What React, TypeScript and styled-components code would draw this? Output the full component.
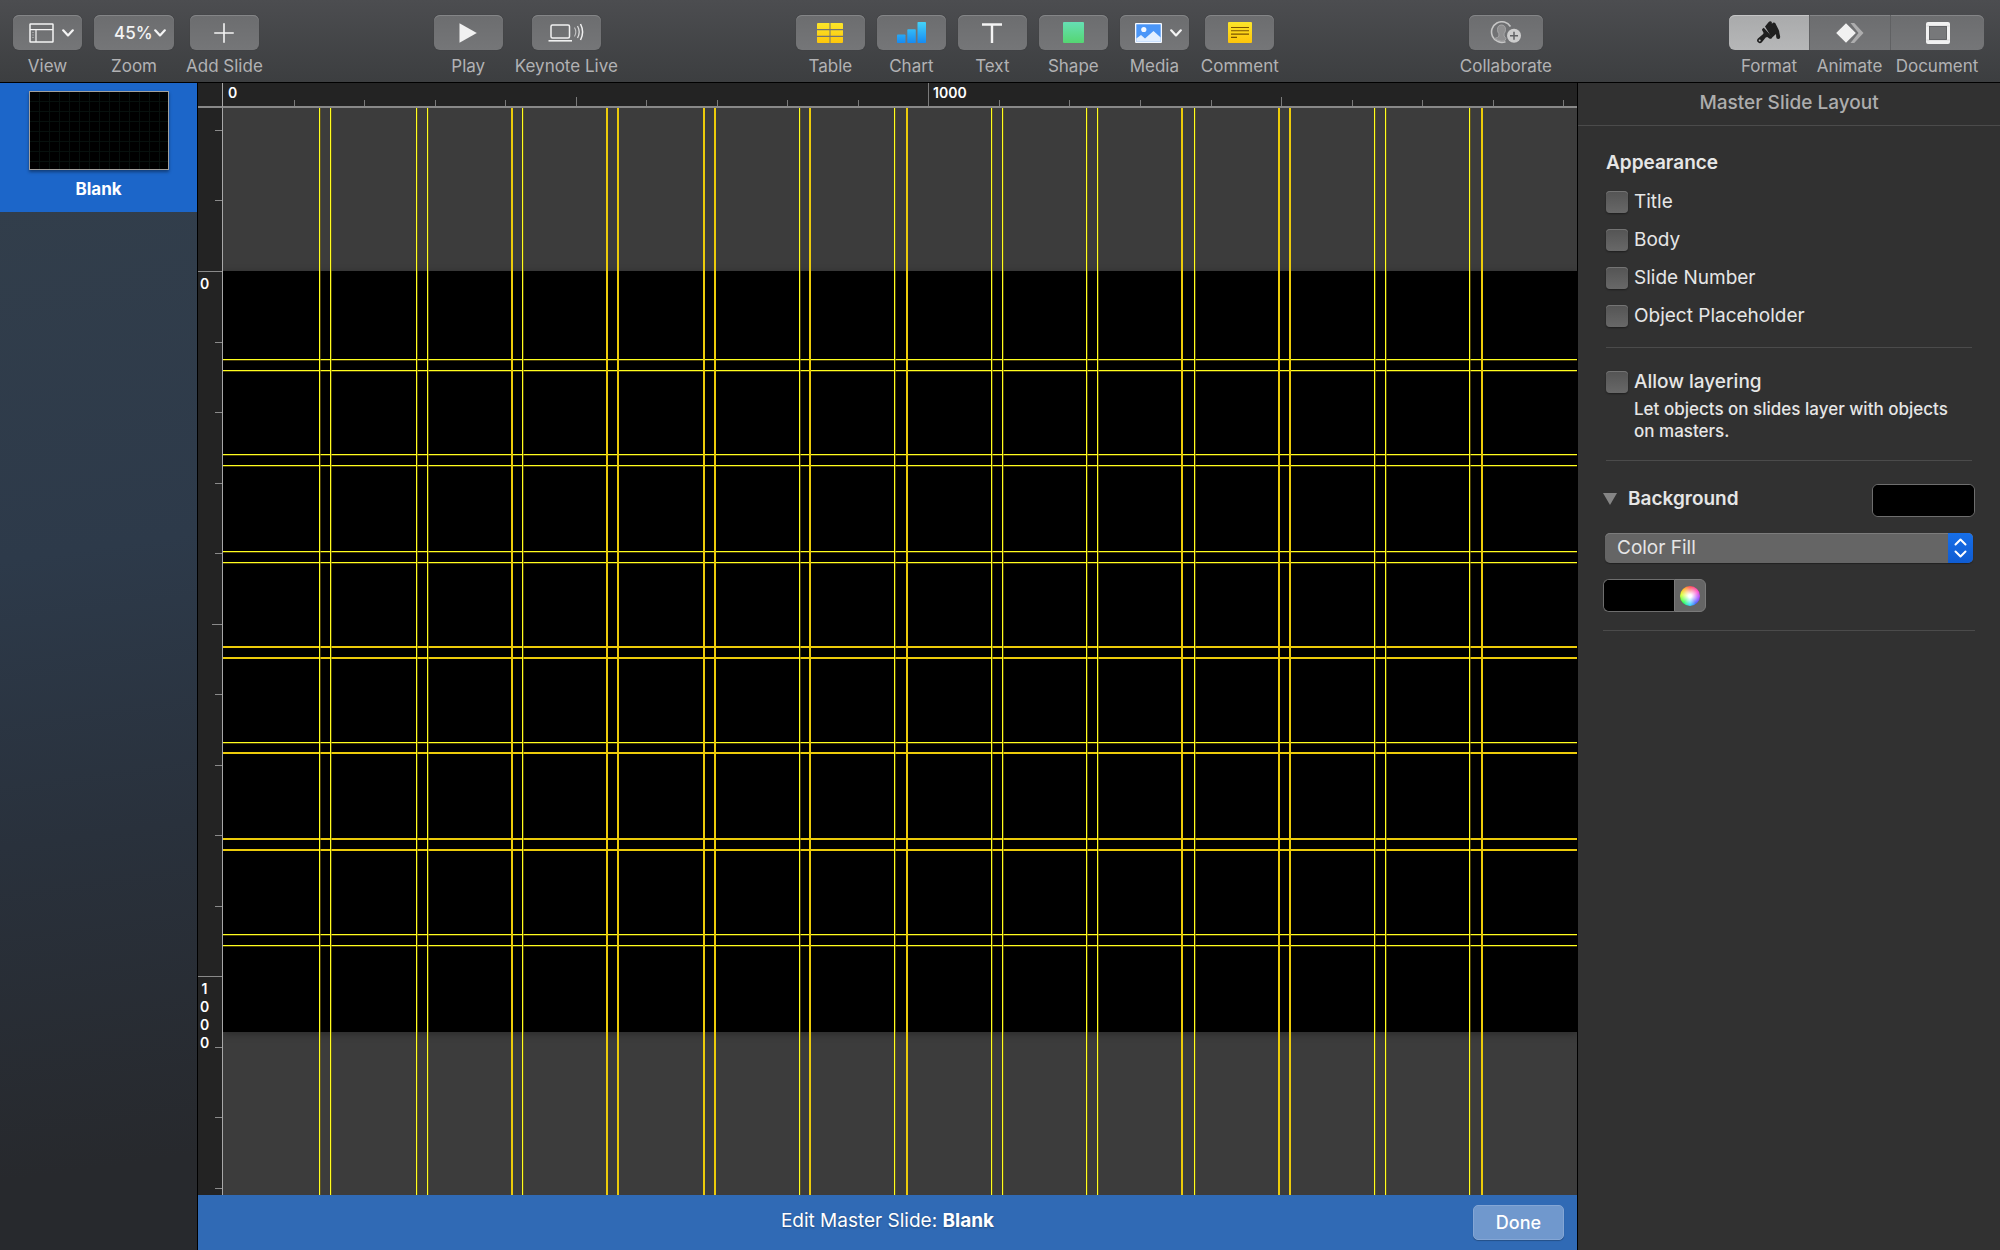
import React, { useState } from "react";
import styled, { createGlobalStyle, css } from "styled-components";

const GlobalStyle = createGlobalStyle`
  *, *::before, *::after { box-sizing: border-box; }
  body {
    margin: 0;
    background: #313131;
    color: #e6e6e6;
    font-family: Inter, "Liberation Sans", sans-serif;
    font-size: 17px;
    line-height: 22px;
  }
  button, select, input { font: inherit; color: inherit; margin: 0; }
`;

/* ---------- page frame ---------- */

const Window = styled.div`
  display: flex;
  flex-direction: column;
  min-height: 100vh;
`;

const Workspace = styled.div`
  flex: 1;
  display: grid;
  grid-template-columns: 198px minmax(0, 1fr) 422px;
`;

/* ---------- toolbar ---------- */

const ToolbarRoot = styled.header`
  display: flex;
  height: 83px;
  padding: 15px 16px 0 13px;
  background: linear-gradient(#4c4d50, #3c3e40);
  border-bottom: 1px solid #000;
`;

const Spacer = styled.div<{ $grow: number }>`
  flex: ${(p) => p.$grow} 1 0;
`;

const ToolGroup = styled.div`
  display: flex;
  align-items: flex-start;
  gap: 12px;
`;

const toolLayout = css`
  display: flex;
  flex-direction: column;
  align-items: center;
  gap: 5px;
  padding: 0;
  border: 0;
  background: none;
`;

const ToolButton = styled.button`
  ${toolLayout}
`;

const ToolField = styled.label`
  ${toolLayout}
`;

const Face = styled.span<{ $width?: number; $menu?: boolean }>`
  position: relative;
  display: flex;
  align-items: center;
  justify-content: center;
  gap: 8px;
  width: ${(p) => p.$width ?? 69}px;
  height: 35px;
  padding-left: ${(p) => (p.$menu ? 8 : 0)}px;
  border-radius: 6px;
  background: linear-gradient(#6c6d6f, #757678);
  box-shadow: inset 0 1px 0 #848587, 0 0 1px #333;
  color: #f4f4f4;
`;

const Caption = styled.span`
  color: #b2b2b4;
  white-space: nowrap;
`;

const ZoomSelect = styled.select`
  width: 100%;
  height: 100%;
  padding: 0 20px 0 20px;
  border: 0;
  background: none;
  appearance: none;
  font-size: 17px;
  font-weight: 500;
`;

const ZoomArrow = styled.span`
  position: absolute;
  right: 8px;
  top: 14px;
  display: flex;
  pointer-events: none;
`;

const Segments = styled.div`
  display: grid;
  grid-template-columns: 80px 81px 94px;
`;

const SegmentFace = styled.span<{ $active: boolean }>`
  display: flex;
  align-items: center;
  justify-content: center;
  width: 100%;
  height: 35px;
  background: ${(p) =>
    p.$active ? "linear-gradient(#a9aaab, #b6b7b8)" : "linear-gradient(#6c6d6f, #757678)"};
  box-shadow: inset 0 1px 0 ${(p) => (p.$active ? "#c4c4c5" : "#848587")};
  border-left: ${(p) => (p.$active ? "0" : "1px solid #606163")};
`;

const SegmentButton = styled(ToolButton)`
  height: 62px;
  &:first-child ${SegmentFace} { border-radius: 6px 0 0 6px; }
  &:last-child ${SegmentFace} { border-radius: 0 6px 6px 0; }
`;

/* ---------- slide navigator ---------- */

const Navigator = styled.nav`
  border-right: 1px solid #000;
  background: linear-gradient(172deg, #323e4b 10%, #2d3a4a 40%, #29313c 64%, #27292d 92%);
`;

const SlideItem = styled.button`
  display: flex;
  flex-direction: column;
  align-items: center;
  gap: 8px;
  width: 100%;
  height: 129px;
  padding: 8px 0 0 0;
  border: 0;
  background: #1c66c9;
  color: #fff;
  font-weight: 700;
`;

const Thumbnail = styled.span`
  width: 140px;
  height: 79px;
  border: 1px solid #a3a09c;
  background:
    repeating-linear-gradient(90deg, transparent 0 9px, #07100d 9px 10px),
    repeating-linear-gradient(transparent 0 9px, #07100d 9px 10px),
    #000;
  box-shadow: 0 2px 3px rgba(0, 0, 0, 0.4);
`;

/* ---------- editor ---------- */

const Editor = styled.main`
  display: grid;
  grid-template-columns: 25px minmax(0, 1fr);
  grid-template-rows: 25px minmax(0, 1fr) 55px;
  border-right: 1px solid #000;
`;

const Corner = styled.div`
  background: #232323;
  border-right: 1px solid #a8a8a8;
  border-bottom: 2px solid #888;
`;

const RulerX = styled.div`
  position: relative;
  overflow: hidden;
  background: #232323;
  border-bottom: 2px solid #888;
`;

const RulerY = styled.div`
  position: relative;
  overflow: hidden;
  background: #232323;
  border-right: 1px solid #a8a8a8;
`;

const TickX = styled.span<{ $at: number; $size: number }>`
  position: absolute;
  bottom: 0;
  left: ${(p) => p.$at}px;
  width: 1px;
  height: ${(p) => p.$size}px;
  background: #7a7a7a;
`;

const TickY = styled.span<{ $at: number; $size: number }>`
  position: absolute;
  right: 0;
  top: calc(50% - 381px + ${(p) => p.$at}px);
  height: 1px;
  width: ${(p) => p.$size}px;
  background: #8a8a8a;
`;

const rulerText = css`
  position: absolute;
  color: #fff;
  font-size: 14px;
  font-weight: 600;
  line-height: 18px;
`;

const MarkX = styled.span<{ $at: number }>`
  ${rulerText}
  top: 1px;
  left: ${(p) => p.$at + 5}px;
`;

const MarkY = styled.span<{ $at: number }>`
  ${rulerText}
  left: 2px;
  top: calc(50% - 377px + ${(p) => p.$at}px);
  width: 9px;
  text-align: center;
  word-break: break-all;
`;

const Canvas = styled.section`
  position: relative;
  display: flex;
  flex-direction: column;
  justify-content: center;
  overflow: hidden;
  background: #3c3c3c;
`;

const Slide = styled.div`
  position: relative;
  height: 761px;
  background: #000;
  box-shadow: 0 2px 8px rgba(0, 0, 0, 0.3);
`;

const GuideX = styled.span<{ $at: number; $bold: boolean }>`
  position: absolute;
  top: 0;
  bottom: 0;
  left: ${(p) => p.$at}px;
  width: ${(p) => (p.$bold ? 2 : 1)}px;
  background: ${(p) => (p.$bold ? "#eccb0a" : "#ffff1e")};
  box-shadow: ${(p) => (p.$bold ? "none" : "1px 0 0 rgba(120, 104, 10, 0.6)")};
`;

const GuideY = styled.span<{ $at: number; $bold: boolean }>`
  position: absolute;
  left: 0;
  right: 0;
  top: ${(p) => p.$at}px;
  height: ${(p) => (p.$bold ? 2 : 1)}px;
  background: ${(p) => (p.$bold ? "#eccb0a" : "#ffff1e")};
  box-shadow: ${(p) => (p.$bold ? "none" : "0 1px 0 rgba(120, 104, 10, 0.6)")};
`;

const EditBar = styled.footer`
  grid-column: 1 / -1;
  display: grid;
  grid-template-columns: 1fr auto 1fr;
  align-items: center;
  padding: 0 13px 0 13px;
  background: #306ab5;
  color: #fff;
  text-shadow: 0 1px 2px rgba(0, 0, 0, 0.35);
`;

const EditTitle = styled.p`
  grid-column: 2;
  margin: 0 0 3px;
  font-size: 19px;
`;

const DoneButton = styled.button`
  justify-self: end;
  width: 91px;
  height: 35px;
  border: 1px solid #84a6d5;
  border-radius: 5px;
  background: #7098cd;
  box-shadow: 0 1px 1px rgba(0, 0, 0, 0.25);
  color: #fff;
  font-size: 18px;
  font-weight: 500;
`;

/* ---------- inspector ---------- */

const Inspector = styled.aside`
  background: #313131;
  font-size: 19px;
`;

const InspectorTitle = styled.h1`
  display: flex;
  align-items: center;
  justify-content: center;
  height: 43px;
  margin: 0;
  padding-bottom: 2px;
  border-bottom: 1px solid #4b4b4b;
  color: #adadad;
  font-size: 19px;
  font-weight: 500;
`;

const InspectorBody = styled.div`
  padding: 25px 25px 0;
`;

const Section = styled.section`
  margin: 0 3px;
  border-bottom: 1px solid #4b4b4b;
`;

const Heading = styled.h2`
  margin: 0;
  font-size: 19px;
  font-weight: 600;
  line-height: 24px;
`;

const CheckList = styled.div`
  display: flex;
  flex-direction: column;
  gap: 14px;
  padding: 15px 0 19px;
`;

const CheckRow = styled.label<{ $strong?: boolean }>`
  display: flex;
  align-items: center;
  gap: 6px;
  height: 24px;
  font-weight: ${(p) => (p.$strong ? 500 : 400)};
`;

const Checkbox = styled.input`
  appearance: none;
  width: 22px;
  height: 22px;
  border-radius: 4px;
  background: linear-gradient(#545454, #686868);
  box-shadow: inset 0 1px 0 #747474, 0 1px 2px rgba(0, 0, 0, 0.4);
`;

const LayeringBlock = styled.div`
  padding: 22px 0 18px;
`;

const Hint = styled.p`
  margin: 4px 0 0;
  padding-left: 28px;
  font-size: 17px;
  font-weight: 500;
`;

const BackgroundSection = styled.section`
  padding: 23px 0 18px;
  border-bottom: 1px solid #4b4b4b;
`;

const BackgroundHeader = styled.div`
  display: flex;
  align-items: center;
  justify-content: space-between;
`;

const Disclosure = styled.button`
  display: flex;
  align-items: center;
  gap: 11px;
  padding: 0 0 4px;
  border: 0;
  background: none;
`;

const Swatch = styled.input<{ $joined?: boolean }>`
  appearance: none;
  width: ${(p) => (p.$joined ? 71 : 103)}px;
  height: 33px;
  padding: 0;
  border: 1px solid #6e6e6e;
  border-right-width: ${(p) => (p.$joined ? 0 : 1)}px;
  border-radius: ${(p) => (p.$joined ? "6px 0 0 6px" : "6px")};
  background: #000;
  &::-webkit-color-swatch-wrapper { padding: 0; }
  &::-webkit-color-swatch { border: 0; border-radius: 5px; }
`;

const FillField = styled.div`
  position: relative;
  margin: 16px 2px;
`;

const FillSelect = styled.select`
  display: block;
  width: 100%;
  height: 30px;
  padding: 0 12px;
  border: 0;
  border-radius: 5px;
  appearance: none;
  background: #656565;
  box-shadow: inset 0 1px 0 #7c7c7c, 0 1px 1px #222;
`;

const FillArrows = styled.span`
  position: absolute;
  top: 0;
  right: 0;
  display: flex;
  align-items: center;
  justify-content: center;
  width: 25px;
  height: 30px;
  border-radius: 0 5px 5px 0;
  background: linear-gradient(#176fe8, #0f5cd2);
  pointer-events: none;
`;

const ColorWell = styled.div`
  display: flex;
`;

const WheelButton = styled.button`
  display: flex;
  align-items: center;
  justify-content: center;
  width: 32px;
  height: 33px;
  padding: 0;
  border: 1px solid #7a7a7a;
  border-radius: 0 6px 6px 0;
  background: #656565;
`;

const Wheel = styled.span`
  width: 20px;
  height: 20px;
  border-radius: 50%;
  background:
    radial-gradient(circle, #fff 10%, rgba(255, 255, 255, 0) 72%),
    conic-gradient(#ff4646, #ff3cc8 60deg, #a03cff 100deg, #3a55ff 140deg, #22d3ff 180deg, #1aff4c 225deg, #d8ff1c 280deg, #ffae1c 320deg, #ff4646);
`;

/* ---------- icons ---------- */

const Chevron = () => (
  <svg width="12" height="8" viewBox="0 0 12 8" fill="none" stroke="#f4f4f4" strokeWidth="2.2" strokeLinecap="round" strokeLinejoin="round">
    <path d="M1.2 1.3 6 6.4l4.8-5.1" />
  </svg>
);

const ViewIcon = () => (
  <svg width="25" height="20" viewBox="0 0 25 20" fill="none" stroke="#f4f4f4">
    <rect x="1" y="1" width="23" height="18" rx="0.6" strokeWidth="1.5" />
    <path d="M1 6.7h23M7 6.7V19" strokeWidth="1.2" />
    <path d="M3 9.5h2M3 12h2M3 14.5h2" strokeWidth="0.7" opacity="0.5" />
  </svg>
);

const PlusIcon = () => (
  <svg width="20" height="20" viewBox="0 0 20 20" stroke="#f4f4f4" strokeWidth="1.6" strokeLinecap="round">
    <path d="M10 .8v18.4M.8 10h18.4" />
  </svg>
);

const PlayIcon = () => (
  <svg width="18" height="20" viewBox="0 0 18 20" fill="#f1f1f1">
    <path d="M.5.2 17.8 10 .5 19.8z" />
  </svg>
);

const LiveIcon = () => (
  <svg width="36" height="20" viewBox="0 0 36 20" fill="none" stroke="#f1f1f1">
    <rect x="3" y="2" width="18.5" height="13" rx="1.5" strokeWidth="1.5" />
    <path d="M.5 17.8h23.5" strokeWidth="1.6" />
    <path d="M26.5 4.5q2.6 4.5 0 9" strokeWidth="1.1" opacity="0.65" />
    <path d="M29.5 3q3.4 6 0 12" strokeWidth="1.3" opacity="0.85" />
    <path d="M32.5 1q4.2 8 0 16" strokeWidth="1.5" />
  </svg>
);

const TableIcon = () => (
  <svg width="26" height="20" viewBox="0 0 26 20">
    <defs>
      <linearGradient id="yellow" x1="0" y1="0" x2="0" y2="20" gradientUnits="userSpaceOnUse">
        <stop offset="0" stopColor="#fce62a" />
        <stop offset="1" stopColor="#fdc60b" />
      </linearGradient>
    </defs>
    <path
      fill="url(#yellow)"
      d="M1 0h11.500v6H0V1a1 1 0 0 1 1-1zM13.500 0H25a1 1 0 0 1 1 1v5H13.500zM0 7.200h12.500v5.600H0zM13.500 7.200H26v5.600H13.500zM0 14h12.500v6H1a1 1 0 0 1-1-1zM13.500 14H26v5a1 1 0 0 1-1 1H13.500z"
    />
  </svg>
);

const ChartIcon = () => (
  <svg width="29" height="21" viewBox="0 0 29 21">
    <defs>
      <linearGradient id="blue" x1="0" y1="0" x2="0" y2="21" gradientUnits="userSpaceOnUse">
        <stop offset="0" stopColor="#45d3f8" />
        <stop offset="1" stopColor="#168bf2" />
      </linearGradient>
    </defs>
    <g fill="url(#blue)">
      <rect x="0" y="12.5" width="8.5" height="8.5" rx="0.8" />
      <rect x="10.3" y="7.2" width="8.5" height="13.8" rx="0.8" />
      <rect x="20.500" y="0" width="8.500" height="21" rx="0.8" />
    </g>
  </svg>
);

const TextIcon = () => (
  <svg width="20" height="20" viewBox="0 0 20 20" fill="none" stroke="#f4f4f4" strokeWidth="2.4">
    <path d="M0 1.5h20M10 1.5V20" />
  </svg>
);

const ShapeIcon = () => (
  <svg width="21" height="21" viewBox="0 0 21 21">
    <defs>
      <linearGradient id="green" x1="0" y1="0" x2="0" y2="1">
        <stop offset="0" stopColor="#66dfb4" />
        <stop offset="1" stopColor="#55d672" />
      </linearGradient>
    </defs>
    <rect width="21" height="21" rx="1" fill="url(#green)" />
  </svg>
);

const MediaIcon = () => (
  <svg width="27" height="20" viewBox="0 0 27 20">
    <rect width="27" height="20" rx="1" fill="#f5f9ff" />
    <rect x="1.3" y="1.3" width="24.4" height="17.4" fill="#4a96f8" />
    <circle cx="8.8" cy="6.5" r="2.6" fill="#f5f9ff" />
    <path d="M1.3 15.5 6 12l4 3.500L18.500 8l7.200 6.500v4.200H1.300z" fill="#e2efff" />
  </svg>
);

const CommentIcon = () => (
  <svg width="24" height="21" viewBox="0 0 24 21">
    <rect width="24" height="21" rx="1" fill="url(#yellow)" />
    <path d="M3 5.5h18M3 8.800h18M3 12.100h18M3 15.400h6" stroke="#7a5200" strokeWidth="1.1" />
  </svg>
);

const CollaborateIcon = () => (
  <svg width="32" height="23" viewBox="0 0 32 23">
    <path d="M20.500 5.500A10.300 10.300 0 1 0 15.500 20.700" fill="none" stroke="#c6c6c6" strokeWidth="1.6" />
    <path
      d="M7.500 8.500c0-3 1.500-4.500 4-4.500s4 1.500 4 4.500c0 2-.8 3.200-1.400 4.200v2.300c.3 1.200 1.600 1.300 2 2.500l-1.500 2.400q-3.200 1.200-7.200-.9L4.500 17.500c1.800-.7 4.100-1 4.400-2.500v-2.300c-.8-1-1.400-2.200-1.400-4.200z"
      fill="#8f8f90" stroke="#a9a9aa" strokeWidth="0.9"
    />
    <circle cx="24" cy="14.8" r="8" fill="#727375" />
    <circle cx="24" cy="14.8" r="7" fill="#cdcdcd" />
    <path d="M24 10.800v8M20 14.800h8" stroke="#626365" strokeWidth="1.5" />
  </svg>
);

const BrushIcon = () => (
  <svg width="24" height="23" viewBox="0 0 24 23" fill="#1f1f1f">
    <path d="M8 5.500 11.500 1.200q1.800-1.700 3.300-.2v1.800l1.700-1.300q1-.2 1.700.5L21.500 8.500q.9 1.500.9 3.500l.8 3.800a2 2 0 1 1-4 .2l-.2-3-3 2.800q-1 .5-2-.4z" />
    <path d="M6.800 6.800l8.700 9.400-1 1.200q-1 .9-2.200 0l-2-1.400q-.9 0-1.600.6L4.900 21.200a2.700 2.700 0 1 1-4-3.700l5-4.300q.8-.8.500-1.800L5.300 9.600q-.6-1.200.2-1.800z" />
    <circle cx="2.700" cy="19.500" r="1" fill="#b6b7b8" />
  </svg>
);

const AnimateIcon = () => (
  <svg width="28" height="20" viewBox="0 0 28 20">
    <path d="M14.500 0h3.700L27.500 10l-9.300 10h-3.700l8-10z" fill="#adadae" />
    <path d="M10 .2 19.800 10 10 19.800.2 10z" fill="#f1f1f1" />
  </svg>
);

const DocumentIcon = () => (
  <svg width="24" height="22" viewBox="0 0 24 22">
    <rect width="24" height="22" rx="2" fill="#f1f1f1" />
    <path d="M.5 4h23M.5 18h23" stroke="#cfcfcf" strokeWidth="0.7" />
    <rect x="3.5" y="4.5" width="17" height="13" fill="#77787a" stroke="#5c5d5f" strokeWidth="0.9" />
  </svg>
);

const UpDownIcon = () => (
  <svg width="13" height="20" viewBox="0 0 13 20" fill="none" stroke="#fff" strokeWidth="2" strokeLinecap="round" strokeLinejoin="round">
    <path d="M1.500 6.500l5-5 5 5M1.500 13.500l5 5 5-5" />
  </svg>
);

const TriangleIcon = () => (
  <svg width="14" height="12" viewBox="0 0 14 12" fill="#858585">
    <path d="M0 0h14L7 12z" />
  </svg>
);

/* ---------- data ---------- */

const PX_PER_HUNDRED = 70.54;

type Guide = [position: number, bold?: boolean];

const columnGuides: Guide[] = [
  [96], [107], [193], [204], [288, true], [299], [383, true], [394, true],
  [480, true], [491, true], [576], [586, true], [671], [683, true],
  [768], [779], [863], [874], [958, true], [971], [1055, true], [1066, true],
  [1151], [1162], [1246], [1258, true],
];

const rowGuides: Guide[] = [
  [88], [99], [183], [194], [280], [291], [375, true], [386, true],
  [471], [481, true], [567, true], [578, true], [663], [674],
];

const ticks = (from: number, to: number) =>
  Array.from({ length: to - from + 1 }, (_, i) => {
    const n = from + i;
    return { n, at: Math.round(n * PX_PER_HUNDRED), major: n % 10 === 0, mid: n % 5 === 0 };
  });

const insertTools = [
  { name: "Table", icon: <TableIcon /> },
  { name: "Chart", icon: <ChartIcon /> },
  { name: "Text", icon: <TextIcon /> },
  { name: "Shape", icon: <ShapeIcon /> },
  { name: "Media", icon: <MediaIcon />, menu: true },
  { name: "Comment", icon: <CommentIcon /> },
];

const panels = [
  { name: "Format", icon: <BrushIcon /> },
  { name: "Animate", icon: <AnimateIcon /> },
  { name: "Document", icon: <DocumentIcon /> },
];

const appearanceOptions = ["Title", "Body", "Slide Number", "Object Placeholder"];

/* ---------- components ---------- */

type ToolProps = { name: string; width?: number; menu?: boolean; children: React.ReactNode };

const Tool = ({ name, width, menu, children }: ToolProps) => (
  <ToolButton type="button">
    <Face $width={width} $menu={menu}>
      {children}
      {menu && <Chevron />}
    </Face>
    <Caption>{name}</Caption>
  </ToolButton>
);

const Toolbar = () => {
  const [panel, setPanel] = useState("Format");
  return (
    <ToolbarRoot>
      <ToolGroup>
        <Tool name="View" menu><ViewIcon /></Tool>
        <ToolField>
          <Face $width={80}>
            <ZoomSelect defaultValue="45%">
              <option>45%</option>
              <option>75%</option>
              <option>100%</option>
            </ZoomSelect>
            <ZoomArrow><Chevron /></ZoomArrow>
          </Face>
          <Caption>Zoom</Caption>
        </ToolField>
        <Tool name="Add Slide"><PlusIcon /></Tool>
      </ToolGroup>
      <Spacer $grow={170} />
      <ToolGroup>
        <Tool name="Play"><PlayIcon /></Tool>
        <Tool name="Keynote Live"><LiveIcon /></Tool>
      </ToolGroup>
      <Spacer $grow={177} />
      <ToolGroup>
        {insertTools.map((t) => (
          <Tool key={t.name} name={t.name} menu={t.menu}>{t.icon}</Tool>
        ))}
      </ToolGroup>
      <Spacer $grow={180} />
      <ToolGroup>
        <Tool name="Collaborate" width={74}><CollaborateIcon /></Tool>
      </ToolGroup>
      <Spacer $grow={176} />
      <Segments>
        {panels.map((p) => (
          <SegmentButton key={p.name} type="button" aria-pressed={p.name === panel} onClick={() => setPanel(p.name)}>
            <SegmentFace $active={p.name === panel}>{p.icon}</SegmentFace>
            <Caption>{p.name}</Caption>
          </SegmentButton>
        ))}
      </Segments>
    </ToolbarRoot>
  );
};

const SlideEditor = () => (
  <Editor>
    <Corner />
    <RulerX>
      {ticks(1, 40).map((t) => (
        <TickX key={t.n} $at={t.at} $size={t.major ? 23 : t.mid ? 9 : 6} />
      ))}
      <MarkX $at={0}>0</MarkX>
      <MarkX $at={705}>1000</MarkX>
    </RulerX>
    <RulerY>
      {ticks(-8, 20).map((t) => (
        <TickY key={t.n} $at={t.at} $size={t.major ? 24 : t.mid ? 10 : 7} />
      ))}
      <MarkY $at={0}>0</MarkY>
      <MarkY $at={705}>1000</MarkY>
    </RulerY>
    <Canvas>
      <Slide>
        {rowGuides.map(([at, bold]) => (
          <GuideY key={at} $at={at} $bold={!!bold} />
        ))}
      </Slide>
      {columnGuides.map(([at, bold]) => (
        <GuideX key={at} $at={at} $bold={!!bold} />
      ))}
    </Canvas>
    <EditBar>
      <EditTitle>Edit Master Slide: <strong>Blank</strong></EditTitle>
      <DoneButton type="button">Done</DoneButton>
    </EditBar>
  </Editor>
);

const FormatInspector = () => (
  <Inspector>
    <InspectorTitle>Master Slide Layout</InspectorTitle>
    <InspectorBody>
      <Section>
        <Heading>Appearance</Heading>
        <CheckList>
          {appearanceOptions.map((name) => (
            <CheckRow key={name}>
              <Checkbox type="checkbox" />
              {name}
            </CheckRow>
          ))}
        </CheckList>
      </Section>
      <Section>
        <LayeringBlock>
          <CheckRow $strong>
            <Checkbox type="checkbox" />
            Allow layering
          </CheckRow>
          <Hint>Let objects on slides layer with objects on masters.</Hint>
        </LayeringBlock>
      </Section>
      <BackgroundSection>
        <BackgroundHeader>
          <Disclosure type="button" aria-expanded="true">
            <TriangleIcon />
            <Heading as="span">Background</Heading>
          </Disclosure>
          <Swatch type="color" defaultValue="#000000" aria-label="Background preview" />
        </BackgroundHeader>
        <FillField>
          <FillSelect aria-label="Fill type" defaultValue="Color Fill">
            <option>Color Fill</option>
            <option>Gradient Fill</option>
            <option>Image Fill</option>
          </FillSelect>
          <FillArrows><UpDownIcon /></FillArrows>
        </FillField>
        <ColorWell>
          <Swatch $joined type="color" defaultValue="#000000" aria-label="Fill color" />
          <WheelButton type="button" aria-label="Open color wheel"><Wheel /></WheelButton>
        </ColorWell>
      </BackgroundSection>
    </InspectorBody>
  </Inspector>
);

export default function App() {
  return (
    <>
      <GlobalStyle />
      <Window>
        <Toolbar />
        <Workspace>
          <Navigator>
            <SlideItem type="button" aria-current="true">
              <Thumbnail />
              Blank
            </SlideItem>
          </Navigator>
          <SlideEditor />
          <FormatInspector />
        </Workspace>
      </Window>
    </>
  );
}
